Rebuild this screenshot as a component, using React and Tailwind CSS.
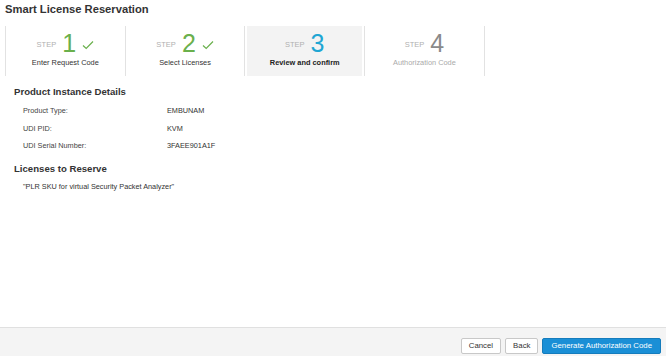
const steps = [
  { n: 1, label: "Enter Request Code", state: "done" },
  { n: 2, label: "Select Licenses", state: "done" },
  { n: 3, label: "Review and confirm", state: "active" },
  { n: 4, label: "Authorization Code", state: "todo" },
];

const details = [
  { label: "Product Type:", value: "EMBUNAM" },
  { label: "UDI PID:", value: "KVM" },
  { label: "UDI Serial Number:", value: "3FAEE901A1F" },
];

const Check = () => (
  <svg width="12" height="10" viewBox="0 0 12 10" className="ml-[6px] mt-[3px]">
    <path d="M1 5.5 L4.2 8.5 L11 1.5" fill="none" stroke="#6ab04c" strokeWidth="1.2" />
  </svg>
);

const Step = ({ step }) => {
  const numColor =
    step.state === "done"
      ? "text-[#6ab04c]"
      : step.state === "active"
      ? "text-[#1fa6d3]"
      : "text-[#8a8a8a]";
  const labelClass =
    step.state === "active"
      ? "font-bold text-[#222]"
      : step.state === "done"
      ? "text-[#333]"
      : "text-[#aaa]";
  return (
    <div className="w-[119.7px] h-[50px] border-l border-[#e2e2e2] flex">
      <div
        className={
          "flex-1 flex flex-col items-center pt-[4px] " +
          (step.state === "active" ? "bg-[#f3f3f3] ml-[2px] mr-[2px]" : "")
        }
      >
        <div className="flex items-center h-[26px]">
          <span className="text-[7.5px] text-[#b0b0b0] mr-[6px] mt-[3px]">STEP</span>
          <span className={"text-[25px] leading-none font-light " + numColor}>{step.n}</span>
          {step.state === "done" && <Check />}
        </div>
        <div className={"text-[7.4px] mt-[1px] " + labelClass}>{step.label}</div>
      </div>
    </div>
  );
};

export default function App() {
  return (
    <div
      className="w-[666px] h-[356px] bg-white flex flex-col text-[#333]"
      style={{ fontFamily: '"Liberation Sans", Arial, sans-serif' }}
    >
      <div className="flex-1">
        <h1 className="text-[11.2px] font-bold text-[#333] px-[5px] pt-[2px] h-[26px] leading-[14px]">
          Smart License Reservation
        </h1>
        <div className="flex pl-[5px]">
          {steps.map((s) => (
            <Step key={s.n} step={s} />
          ))}
          <div className="border-l border-[#e2e2e2] h-[50px]" />
        </div>

        <div className="px-[14px] pt-[10px]">
          <h2 className="text-[9.6px] font-bold text-[#333] leading-[12px]">Product Instance Details</h2>
          <div className="pl-[9px] pt-[5px] flex flex-col">
            {details.map((d) => (
              <div key={d.label} className="flex h-[17.5px] items-center text-[7.3px]">
                <span className="w-[144px] text-[#444]">{d.label}</span>
                <span className="text-[#333]">{d.value}</span>
              </div>
            ))}
          </div>
          <h2 className="text-[9.6px] font-bold text-[#333] leading-[12px] mt-[7px]">Licenses to Reserve</h2>
          <div className="pl-[9px] pt-[7px] text-[7.3px] text-[#333]">
            "PLR SKU for virtual Security Packet Analyzer"
          </div>
        </div>
      </div>

      <div className="h-[29px] border-t border-[#e0e0e0] bg-[#f4f4f4] flex items-end justify-end gap-[4px] pr-[5px] pb-[2px]">
        <button className="h-[16px] px-[7px] text-[7.8px] text-[#333] bg-white border border-[#c8c8c8] rounded-[2px]">
          Cancel
        </button>
        <button className="h-[16px] px-[7px] text-[7.8px] text-[#333] bg-white border border-[#c8c8c8] rounded-[2px]">
          Back
        </button>
        <button className="h-[16px] px-[8px] text-[7.8px] text-white bg-[#1a8fd6] border border-[#157cbc] rounded-[2px]">
          Generate Authorization Code
        </button>
      </div>
    </div>
  );
}
